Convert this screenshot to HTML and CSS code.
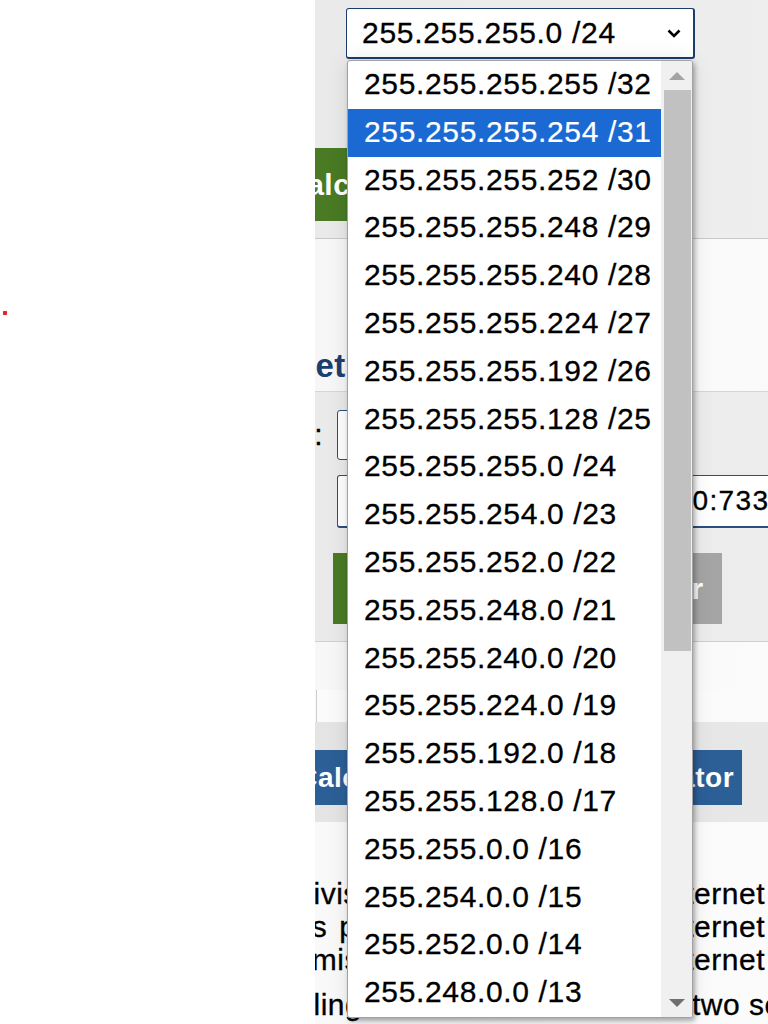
FILE: index.html
```html
<!DOCTYPE html>
<html lang="en">
<head>
<meta charset="utf-8">
<title>Subnet Calculator</title>
<link rel="stylesheet" href="styles.css">
</head>
<body>
<div class="page">
  <aside class="gutter"><span class="dot"></span></aside>
  <main class="viewport">
    <div class="inner">
      <section class="p1">
        <div class="select-wrap">
          <div class="select">
            <span>255.255.255.0 /24</span>
            <svg class="chev" width="14" height="9" viewBox="0 0 14 9"><path d="M1.5 1.5 L7 7 L12.5 1.5" fill="none" stroke="#000" stroke-width="2.6"/></svg>
          </div>
          <div class="listbox">
            <ul class="options">
              <li>255.255.255.255 /32</li>
              <li class="sel">255.255.255.254 /31</li>
              <li>255.255.255.252 /30</li>
              <li>255.255.255.248 /29</li>
              <li>255.255.255.240 /28</li>
              <li>255.255.255.224 /27</li>
              <li>255.255.255.192 /26</li>
              <li>255.255.255.128 /25</li>
              <li>255.255.255.0 /24</li>
              <li>255.255.254.0 /23</li>
              <li>255.255.252.0 /22</li>
              <li>255.255.248.0 /21</li>
              <li>255.255.240.0 /20</li>
              <li>255.255.224.0 /19</li>
              <li>255.255.192.0 /18</li>
              <li>255.255.128.0 /17</li>
              <li>255.255.0.0 /16</li>
              <li>255.254.0.0 /15</li>
              <li>255.252.0.0 /14</li>
              <li>255.248.0.0 /13</li>
              <li>255.240.0.0 /12</li>
              <li>255.224.0.0 /11</li>
              <li>255.192.0.0 /10</li>
              <li>255.128.0.0 /9</li>
              <li>255.0.0.0 /8</li>
              <li>254.0.0.0 /7</li>
              <li>252.0.0.0 /6</li>
              <li>248.0.0.0 /5</li>
              <li>240.0.0.0 /4</li>
              <li>224.0.0.0 /3</li>
              <li>192.0.0.0 /2</li>
              <li>128.0.0.0 /1</li>
            </ul>
            <div class="scrollbar">
              <div class="sb-btn"><span class="tri-up"></span></div>
              <div class="thumb"></div>
              <div class="track"></div>
              <div class="sb-btn"><span class="tri-down"></span></div>
            </div>
          </div>
        </div>
        <div class="btn btn-top">Calculate</div>
      </section>

      <section class="p2">
        <h2 class="title">Subnet Calculator</h2>
      </section>

      <section class="p3">
        <div class="form">
          <label class="lbl">Prefix Length:</label>
          <input class="field" type="text" value="">
          <label class="lbl">Address</label>
          <input class="field wide" type="text" value="2001:db8:85a3::8a2e:370:7334">
        </div>
        <div class="actions">
          <div class="btn btn-go">Calculate</div>
          <div class="btn btn-clear">Clear</div>
        </div>
      </section>

      <section class="p4">
        <div class="result"></div>
      </section>

      <section class="p5">
        <a class="nav nav-a">IP Calculator</a>
        <a class="nav nav-b">Subnet Calculator</a>
      </section>

      <section class="p6">
        <p class="para">
          <span class="ln">Division of the public Internet</span>
          <span class="ln">As part of all data on the Internet</span>
          <span class="ln">Emission control on the Internet</span>
        </p>
        <p class="para para2">
          <span class="ln-split"><span class="lead">Cling to one of the</span><span class="tail">two segments of the network</span></span>
        </p>
      </section>
    </div>
  </main>
</div>
</body>
</html>
```

FILE: styles.css
```css
* {
  box-sizing: border-box;
  margin: 0;
  padding: 0;
}

body {
  margin: 0;
  font-family: "Liberation Sans", Arial, sans-serif;
  background: #ffffff;
  color: #000000;
}

.page {
  display: flex;
  width: 768px;
  height: 1024px;
  overflow: hidden;
}

.gutter {
  flex: 0 0 315px;
  padding: 311px 0 0 3px;
  background: #ffffff;
}

.dot {
  display: block;
  width: 4px;
  height: 4px;
  background: #e3262c;
  border-radius: 1px;
  box-shadow: 0 0 1px #f07a7a;
}

.viewport {
  flex: 0 0 453px;
  height: 1024px;
  overflow: hidden;
  position: relative;
}

.inner {
  width: 760px;
  margin-left: -200px;
}

/* ---------- section 1 ---------- */
.p1 {
  height: 239px;
  border-bottom: 1px solid #c9c9c9;
  background: linear-gradient(90deg, #e8e8e8, #efefef);
  padding-top: 8px;
}

.select-wrap {
  position: relative;
  margin-left: 231px;
  width: 349px;
}

.select {
  height: 51px;
  display: flex;
  align-items: center;
  justify-content: space-between;
  padding: 0 12px 0 15px;
  background: #ffffff;
  border: solid #1c3c6c;
  border-width: 1px 2px 2px 1px;
  border-radius: 3px;
  font-size: 30px;
  letter-spacing: 0.7px;
  color: #000000;
  -webkit-text-stroke: 0.3px #000000;
  white-space: nowrap;
}

.chev {
  display: block;
}

.listbox {
  position: absolute;
  top: calc(100% + 1px);
  left: 1px;
  width: 346px;
  height: 958px;
  display: flex;
  background: #ffffff;
  border: 1px solid #a2a2a2;
  border-radius: 3px;
  box-shadow: 2px 3px 5px rgba(0, 0, 0, 0.3), 0 0 22px rgba(0, 0, 0, 0.1);
  z-index: 10;
  overflow: hidden;
}

.options {
  flex: 1;
  list-style: none;
  overflow: hidden;
}

.options li {
  height: 47.8px;
  line-height: 45px;
  padding-left: 16px;
  font-size: 30px;
  letter-spacing: 0.65px;
  white-space: nowrap;
  color: #000000;
  -webkit-text-stroke: 0.3px #000000;
}

.options li.sel {
  background: #1b6ad3;
  color: #ffffff;
  -webkit-text-stroke: 0.2px #ffffff;
}

.scrollbar {
  flex: 0 0 31px;
  background: #f0f0f0;
  display: flex;
  flex-direction: column;
}

.sb-btn {
  height: 29px;
  flex: 0 0 29px;
  display: flex;
  align-items: center;
  justify-content: center;
}

.tri-up {
  width: 0;
  height: 0;
  border-left: 8px solid transparent;
  border-right: 8px solid transparent;
  border-bottom: 8px solid #a3a3a3;
}

.tri-down {
  width: 0;
  height: 0;
  border-left: 8px solid transparent;
  border-right: 8px solid transparent;
  border-top: 8px solid #6f6f6f;
}

.thumb {
  flex: 0 0 561px;
  margin: 0 1px 0 3px;
  background: #c1c1c1;
}

.track {
  flex: 1;
}

.btn {
  color: #ffffff;
  font-weight: bold;
  font-size: 30px;
  letter-spacing: 0.5px;
  white-space: nowrap;
}

.btn-top {
  margin: 89px 0 0 146px;
  width: 186px;
  height: 73px;
  line-height: 73px;
  padding-left: 24px;
  background: #4a7a24;
}

/* ---------- section 2 ---------- */
.p2 {
  height: 153px;
  border-bottom: 1px solid #d6d6d6;
  background: linear-gradient(90deg, #f5f5f5, #fbfbfb);
  padding: 107px 0 0 116px;
}

.title {
  font-size: 33px;
  line-height: 40px;
  font-weight: bold;
  color: #1b3f6e;
  letter-spacing: 0.5px;
  white-space: nowrap;
}

/* ---------- section 3 ---------- */
.p3 {
  height: 250px;
  border-bottom: 1px solid #cfcfcf;
  background: linear-gradient(90deg, #e9e9e9, #ededed);
  padding-top: 18px;
}

.form {
  display: grid;
  grid-template-columns: 206px 470px;
  grid-template-rows: 50px 53px;
  row-gap: 15px;
  padding-left: 16px;
  align-items: center;
}

.lbl {
  font-size: 30px;
  letter-spacing: 0.5px;
  white-space: nowrap;
  color: #000000;
  -webkit-text-stroke: 0.3px #000000;
}

.field {
  display: block;
  height: 50px;
  width: 320px;
  border: 1px solid #2c4e80;
  border-radius: 3px;
  background: #ffffff;
  font-family: "Liberation Sans", Arial, sans-serif;
  font-size: 28px;
  letter-spacing: 1.4px;
  color: #000000;
  -webkit-text-stroke: 0.3px #000000;
  padding-left: 20px;
  outline: none;
}

.field.wide {
  width: 470px;
  height: 53px;
  border-bottom-width: 2px;
}

.actions {
  display: flex;
  gap: 35px;
  margin: 25px 0 0 218px;
}

.btn-go {
  width: 240px;
  height: 71px;
  line-height: 71px;
  padding-left: 24px;
  background: #4a7a24;
}

.btn-clear {
  width: 114px;
  height: 71px;
  line-height: 71px;
  text-align: center;
  background: #a5a5a5;
}

/* ---------- section 4 ---------- */
.p4 {
  height: 80px;
  background: linear-gradient(90deg, #f6f6f6, #fbfbfb);
  padding-top: 48px;
}

.result {
  margin-left: 201px;
  height: 32px;
  border-left: 1px solid #cdcdcd;
  background: #fbfbfb;
}

/* ---------- section 5 ---------- */
.p5 {
  height: 100px;
  background: linear-gradient(90deg, #e3e3e3, #e8e8e8);
  padding: 28px 0 0 139px;
  display: flex;
  gap: 30px;
}

.nav {
  display: block;
  flex: none;
  height: 55px;
  line-height: 55px;
  padding: 0 8px;
  background: #2c5f96;
  color: #ffffff;
  font-weight: bold;
  font-size: 28px;
  letter-spacing: 0.5px;
  white-space: nowrap;
  text-decoration: none;
  overflow: hidden;
}

.nav-a {
  width: 194px;
}

.nav-b {
  width: 264px;
  text-align: right;
}

/* ---------- section 6 ---------- */
.p6 {
  height: 202px;
  background: linear-gradient(90deg, #f8f8f8, #fcfcfc);
  padding: 54.6px 0 0 176.3px;
}

.para {
  width: 473.7px;
  font-size: 30px;
  letter-spacing: 0.5px;
  line-height: 33px;
  color: #000000;
  -webkit-text-stroke: 0.3px #000000;
}

.para2 {
  width: auto;
  margin-top: 12px;
}

.ln {
  display: block;
  text-align: justify;
  text-align-last: justify;
}

.ln-split {
  display: flex;
  white-space: nowrap;
}

.lead {
  flex: 0 0 400.7px;
}

.tail {
  flex: none;
}
```
